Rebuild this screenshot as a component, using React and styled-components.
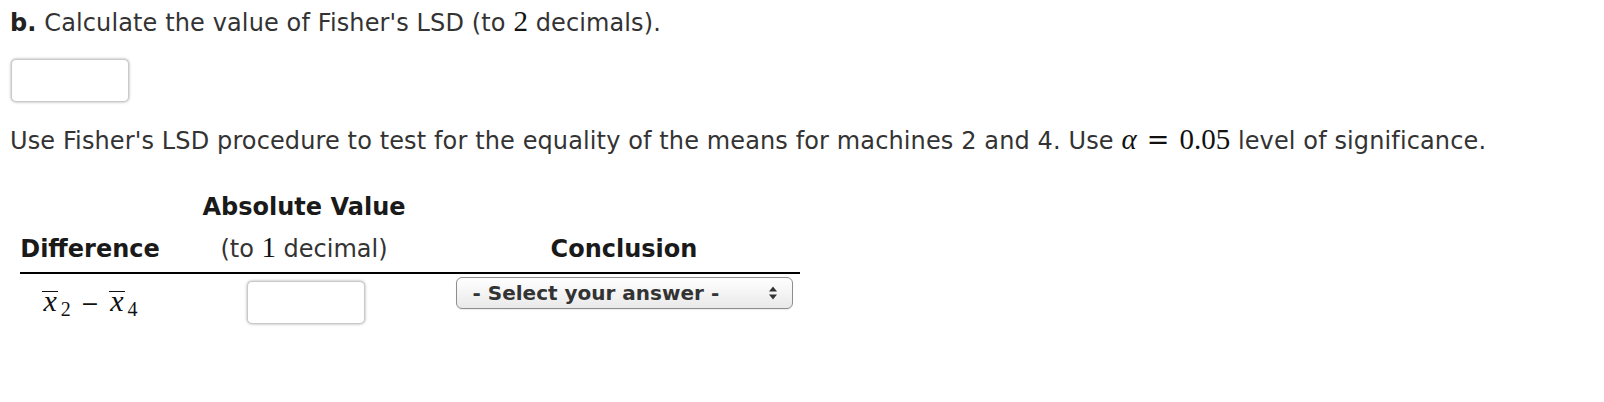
import React from "react";
import styled, { createGlobalStyle } from "styled-components";

const Global = createGlobalStyle`
  html, body { margin: 0; padding: 0; background: #fff; }
  body { font-family: "DejaVu Sans", Verdana, sans-serif; color: #333; }
`;

const Page = styled.div`
  width: 1604px;
  height: 402px;
  box-sizing: border-box;
  padding: 9px 0 0 10px;
`;

const Para = styled.p`
  margin: ${(p) => p.$mt || 0}px 0 0 0;
  font-size: 24px;
  line-height: 28px;
  letter-spacing: 0.12px;
  white-space: nowrap;
`;

const Strong = styled.b`
  font-weight: bold;
  color: #222;
`;

const MathNum = styled.span`
  font-family: "Liberation Serif", "DejaVu Serif", serif;
  font-size: 29px;
  line-height: 0;
  letter-spacing: 0;
  color: #111;
`;

const MathIt = styled.span`
  font-family: "Liberation Serif", "DejaVu Serif", serif;
  font-style: italic;
  font-size: 29px;
  line-height: 0;
  letter-spacing: 0;
  color: #111;
`;

const MathRel = styled.span`
  display: inline-block;
  font-family: "DejaVu Serif", "Liberation Serif", serif;
  font-size: 27px;
  line-height: 0;
  margin: 0 ${(p) => p.$gap || 8}px;
  color: #111;
`;

const AnswerBox = styled.input`
  display: block;
  box-sizing: border-box;
  width: 118px;
  height: 43px;
  margin: ${(p) => p.$mt || 0}px 0 0 ${(p) => p.$ml || 0}px;
  border: 1px solid #c9c9c9;
  border-radius: 5px;
  background: #fff;
  box-shadow: 0 0 3px rgba(0, 0, 0, 0.35);
  outline: none;
`;

const Table = styled.div`
  display: grid;
  grid-template-columns: 140px 288px 352px;
  width: 780px;
  margin: 38px 0 0 10px;
`;

const HeadCell = styled.div`
  display: flex;
  flex-direction: column;
  align-items: center;
  justify-content: flex-end;
  gap: 14px;
  padding-bottom: 9px;
  border-bottom: 2px solid #000;
  font-size: 24px;
  line-height: 28px;
  white-space: nowrap;
`;

const HeadBold = styled.span`
  font-weight: bold;
  color: #1a1a1a;
`;

const BodyCell = styled.div`
  display: flex;
  justify-content: center;
  align-items: flex-start;
  padding: ${(p) => p.$pt || 0}px 0 0 ${(p) => p.$pl || 0}px;
  font-size: 24px;
  line-height: 28px;
`;

const MathRow = styled.div`
  display: flex;
  align-items: baseline;
  height: 28px;
  font-family: "Liberation Serif", "DejaVu Serif", serif;
  color: #111;
`;

const BarX = styled.span`
  display: inline-block;
  font-style: italic;
  font-size: 30px;
  line-height: 17px;
  border-top: 1.5px solid #111;
  padding: 0 1px;
`;

const Sub = styled.span`
  font-size: 20px;
  position: relative;
  top: 5px;
  margin-left: 3px;
`;

const Minus = styled.span`
  font-family: "DejaVu Serif", "Liberation Serif", serif;
  margin: 0 10px;
  font-size: 22px;
`;

const SelectBox = styled.div`
  box-sizing: border-box;
  width: 337px;
  height: 32px;
  display: flex;
  align-items: center;
  justify-content: space-between;
  padding: 0 14px 0 16px;
  border: 1px solid #8e8e8e;
  border-radius: 6px;
  background: linear-gradient(#ffffff, #e9e9e9);
  box-shadow: inset 0 1px 0 #fff, 0 1px 1px rgba(0, 0, 0, 0.08);
  font-size: 20px;
  font-weight: bold;
  color: #333;
  white-space: nowrap;
`;

const Arrows = styled.svg`
  width: 10px;
  height: 16px;
`;

export default function App() {
  return (
    <>
      <Global />
      <Page>
        <Para>
          <Strong>b.</Strong> Calculate the value of Fisher's LSD (to <MathNum>2</MathNum> decimals).
        </Para>
        <AnswerBox $mt={22} $ml={1} />
        <Para $mt={25}>
          Use Fisher's LSD procedure to test for the equality of the means for machines 2 and 4. Use{" "}
          <MathIt>α</MathIt>
          <MathRel $gap={10}>=</MathRel>
          <MathNum>0.05</MathNum> level of significance.
        </Para>
        <Table>
          <HeadCell>
            <HeadBold>Difference</HeadBold>
          </HeadCell>
          <HeadCell>
            <HeadBold>Absolute Value</HeadBold>
            <span>
              (to <MathNum>1</MathNum> decimal)
            </span>
          </HeadCell>
          <HeadCell>
            <HeadBold>Conclusion</HeadBold>
          </HeadCell>
          <BodyCell $pt={16}>
            <MathRow>
              <BarX>x</BarX>
              <Sub>2</Sub>
              <Minus>−</Minus>
              <BarX>x</BarX>
              <Sub>4</Sub>
            </MathRow>
          </BodyCell>
          <BodyCell $pt={7} $pl={3}>
            <AnswerBox />
          </BodyCell>
          <BodyCell $pt={3}>
            <SelectBox>
              <span>- Select your answer -</span>
              <Arrows viewBox="0 0 10 16">
                <path d="M5 1.5 L9 6.5 L1 6.5 Z" fill="#333" />
                <path d="M5 14.5 L9 9.5 L1 9.5 Z" fill="#333" />
              </Arrows>
            </SelectBox>
          </BodyCell>
        </Table>
      </Page>
    </>
  );
}
